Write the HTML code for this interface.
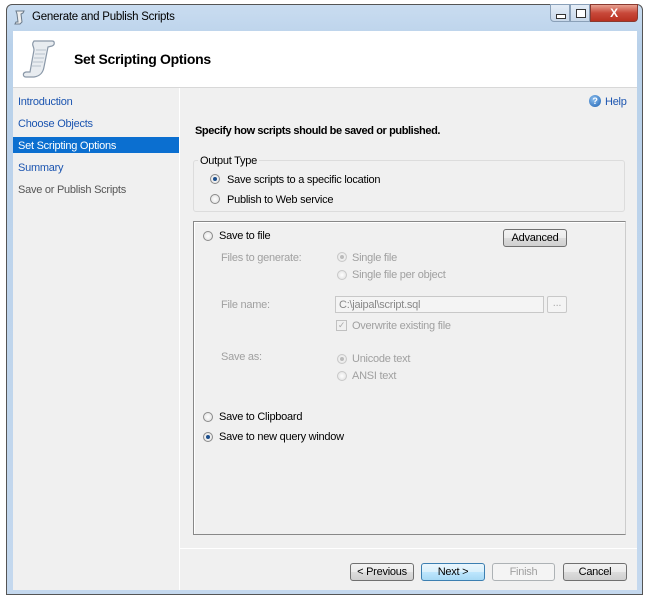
<!DOCTYPE html><html><head><style>
body{margin:0;width:650px;height:600px;background:#fff;position:relative;overflow:hidden;font-family:"Liberation Sans",sans-serif;font-size:11px;color:#000;letter-spacing:-0.25px}
.a{position:absolute}
.frame{left:6px;top:4px;width:637px;height:591px;background:linear-gradient(#c9dcf0,#b9d1ea 40px,#c4d8ee);border:1px solid #555;border-radius:6px 6px 0 0;box-sizing:border-box}
.t{white-space:nowrap}
.g{color:#a0a0a0}
.rad{width:10px;height:10px;border-radius:50%;border:1px solid #8a8a8a;background:radial-gradient(#fff,#ddd);box-sizing:border-box}
.rad.on::after{content:"";position:absolute;left:2px;top:2px;width:4px;height:4px;border-radius:50%;background:#1d4f8c}
.rad.dis{border-color:#c8c8c8}
.rad.dis.on::after{background:#bbb}
.btn{height:18px;border:1px solid #707070;border-radius:3px;background:linear-gradient(#f2f2f2,#ebebeb 50%,#dcdcdc 51%,#cfcfcf);box-sizing:border-box;text-align:center;line-height:16px;font-size:11px}
</style></head><body>
<div class="a frame"></div>
<svg class="a" style="left:12px;top:9px" width="16" height="16" viewBox="0 0 16 16"><path d="M4 2h8l-1 2-2 1 1 8-2 2H3l1-2 2 0-1-8z" fill="#eee" stroke="#6a7a8a"/></svg>
<div class="a t" style="left:32px;top:11px;font-size:11.5px">Generate and Publish Scripts</div>
<div class="a" style="left:550px;top:4px;width:20px;height:18px;border:1px solid #8aa0b8;border-radius:0 0 0 4px;box-sizing:border-box;background:linear-gradient(#e4edf7,#c8d8ea)"><div class="a" style="left:5px;top:9px;width:8px;height:3px;border:1px solid #333;background:#fff"></div></div>
<div class="a" style="left:570px;top:4px;width:20px;height:18px;border:1px solid #8aa0b8;box-sizing:border-box;background:linear-gradient(#e4edf7,#c8d8ea)"><div class="a" style="left:5px;top:4px;width:8px;height:7px;border:1px solid #333;background:#fff"></div></div>
<div class="a" style="left:590px;top:4px;width:48px;height:18px;border:1px solid #8a3a30;border-radius:0 0 4px 0;box-sizing:border-box;background:linear-gradient(#e8a090,#c8483a 50%,#b83020);color:#fff;font-weight:bold;text-align:center;line-height:16px;font-size:12px">X</div>
<div class="a" style="left:13px;top:31px;width:624px;height:56px;background:#fff;border-bottom:1px solid #d8d8d8"></div>
<svg class="a" style="left:20px;top:38px" width="38" height="42" viewBox="0 0 38 42"><path d="M14 3h18c3 0 3 4 0 5l-4 1 -4 20c-1 6-4 9-10 10H6c-3 0-4-4 0-5l4 0 4-22c0-4-3-5 0-9z" fill="#e8ecf0" stroke="#8a98a8" stroke-width="1.2"/><path d="M16 12h10M15 16h10M14 20h10M13 24h10M12 28h9" stroke="#b8c2cc"/></svg>
<div class="a t" style="left:74px;top:51px;font-size:14px;font-weight:bold;letter-spacing:-0.3px">Set Scripting Options</div>
<div class="a" style="left:13px;top:88px;width:166px;height:502px;background:#f0f0f0"></div>
<div class="a" style="left:179px;top:88px;width:1px;height:502px;background:#fff"></div>
<div class="a" style="left:180px;top:88px;width:457px;height:502px;background:#f0f0f0"></div>
<div class="a t" style="left:18px;top:96px;color:#1c55b0">Introduction</div>
<div class="a t" style="left:18px;top:118px;color:#1c55b0">Choose Objects</div>
<div class="a" style="left:13px;top:137px;width:166px;height:16px;background:#0b6fd0"></div>
<div class="a t" style="left:18px;top:140px;color:#fff">Set Scripting Options</div>
<div class="a t" style="left:18px;top:162px;color:#1c55b0">Summary</div>
<div class="a t" style="left:18px;top:184px;color:#555">Save or Publish Scripts</div>
<div class="a" style="left:589px;top:95px;width:12px;height:12px;border-radius:50%;background:radial-gradient(circle at 40% 35%,#8ec0f0,#1a5fb0);color:#fff;font-size:9px;font-weight:bold;text-align:center;line-height:12px">?</div>
<div class="a t" style="left:605px;top:96px;color:#1c55b0">Help</div>
<div class="a t" style="left:195px;top:125px;font-weight:bold;letter-spacing:-0.4px">Specify how scripts should be saved or published.</div>
<div class="a" style="left:193px;top:160px;width:432px;height:52px;border:1px solid #dcdcdc;border-radius:3px;box-sizing:border-box"></div>
<div class="a t" style="left:198px;top:155px;background:#f0f0f0;padding:0 2px">Output Type</div>
<div class="a rad on" style="left:210px;top:174px"></div><div class="a t" style="left:227px;top:174px">Save scripts to a specific location</div>
<div class="a rad" style="left:210px;top:194px"></div><div class="a t" style="left:227px;top:194px">Publish to Web service</div>
<div class="a" style="left:193px;top:221px;width:433px;height:314px;border:1px solid #888;border-right-color:#ccc;border-bottom-color:#888;box-sizing:border-box;box-shadow:inset 1px 1px 0 #fff"></div>
<div class="a rad" style="left:203px;top:231px"></div><div class="a t" style="left:219px;top:230px">Save to file</div>
<div class="a btn" style="left:503px;top:229px;width:64px">Advanced</div>
<div class="a t g" style="left:221px;top:252px">Files to generate:</div>
<div class="a rad dis on" style="left:337px;top:252px"></div><div class="a t g" style="left:352px;top:252px">Single file</div>
<div class="a rad dis" style="left:337px;top:270px"></div><div class="a t g" style="left:352px;top:269px">Single file per object</div>
<div class="a t g" style="left:221px;top:299px">File name:</div>
<div class="a" style="left:335px;top:296px;width:209px;height:17px;border:1px solid #c8c8c8;background:#f4f4f4;box-sizing:border-box"></div>
<div class="a t g" style="left:339px;top:299px;color:#888">C:\jaipal\script.sql</div>
<div class="a" style="left:547px;top:296px;width:20px;height:17px;border:1px solid #c8c8c8;border-radius:2px;box-sizing:border-box;background:#f4f4f4;color:#aaa;text-align:center;line-height:12px">...</div>
<div class="a" style="left:336px;top:320px;width:11px;height:11px;border:1px solid #c0c0c0;box-sizing:border-box;color:#aaa;font-size:9px;line-height:9px;text-align:center">✓</div><div class="a t g" style="left:352px;top:320px">Overwrite existing file</div>
<div class="a t g" style="left:221px;top:351px">Save as:</div>
<div class="a rad dis on" style="left:337px;top:354px"></div><div class="a t g" style="left:352px;top:353px">Unicode text</div>
<div class="a rad dis" style="left:337px;top:371px"></div><div class="a t g" style="left:352px;top:370px">ANSI text</div>
<div class="a rad" style="left:203px;top:412px"></div><div class="a t" style="left:219px;top:411px">Save to Clipboard</div>
<div class="a rad on" style="left:203px;top:432px"></div><div class="a t" style="left:219px;top:431px">Save to new query window</div>
<div class="a" style="left:180px;top:548px;width:457px;height:1px;background:#fff"></div>
<div class="a btn" style="left:350px;top:563px;width:64px">&lt; Previous</div>
<div class="a btn" style="left:421px;top:563px;width:64px;border-color:#3c7fb1;background:linear-gradient(#eaf6fd,#d9f0fc 50%,#bee6fd 51%,#a7d9f5)">Next &gt;</div>
<div class="a btn" style="left:492px;top:563px;width:63px;border-color:#adb2b5;background:#f4f4f4;color:#a0a0a0">Finish</div>
<div class="a btn" style="left:563px;top:563px;width:64px">Cancel</div>
</body></html>
